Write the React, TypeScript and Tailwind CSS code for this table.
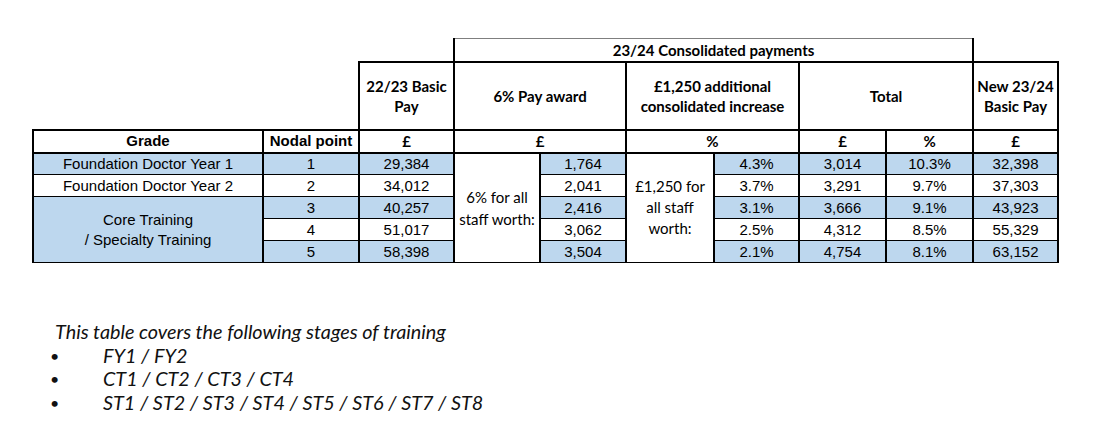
import React from 'react';

const BLUE = 'bg-[#bdd7ee]';

type Row = {
  grade?: { text: React.ReactNode; span?: number };
  nodal: string;
  basic: string;
  award: string;
  pct: string;
  total: string;
  totalPct: string;
  newPay: string;
  blue: boolean;
};

const rows: Row[] = [
  { grade: { text: 'Foundation Doctor Year 1' }, nodal: '1', basic: '29,384', award: '1,764', pct: '4.3%', total: '3,014', totalPct: '10.3%', newPay: '32,398', blue: true },
  { grade: { text: 'Foundation Doctor Year 2' }, nodal: '2', basic: '34,012', award: '2,041', pct: '3.7%', total: '3,291', totalPct: '9.7%', newPay: '37,303', blue: false },
  {
    grade: { text: (<>Core Training<br />/ Specialty Training</>), span: 3 },
    nodal: '3', basic: '40,257', award: '2,416', pct: '3.1%', total: '3,666', totalPct: '9.1%', newPay: '43,923', blue: true,
  },
  { nodal: '4', basic: '51,017', award: '3,062', pct: '2.5%', total: '4,312', totalPct: '8.5%', newPay: '55,329', blue: false },
  { nodal: '5', basic: '58,398', award: '3,504', pct: '2.1%', total: '4,754', totalPct: '8.1%', newPay: '63,152', blue: true },
];

const colWidths = [230, 96, 95, 86, 86, 88, 85, 87, 87, 85];

const head = "border-2 border-black text-center align-middle font-bold text-[15px] leading-[20px] font-['Lato',sans-serif] p-0";
const cell = "border-x-2 border-y border-black text-center align-middle p-0";

export default function App() {
  return (
    <div className="min-h-[445px] bg-white pl-[32px] pt-[38px] text-black">
      <table className="table-fixed border-collapse w-[1025px] font-['Liberation_Sans',Arial,sans-serif] text-[15px]">
        <colgroup>
          {colWidths.map((w, i) => (
            <col key={i} style={{ width: w }} />
          ))}
        </colgroup>
        <thead>
          <tr className="h-[23px]">
            <th colSpan={3} className="p-0" />
            <th colSpan={6} className={`${head} border-t border-t-[#7f7f7f]`}>
              23/24 Consolidated payments
            </th>
            <th className="p-0" />
          </tr>
          <tr className="h-[68px]">
            <th colSpan={2} className="p-0" />
            <th className={head}>22/23 Basic<br />Pay</th>
            <th colSpan={2} className={head}>6% Pay award</th>
            <th colSpan={2} className={head}>£1,250 additional<br />consolidated increase</th>
            <th colSpan={2} className={head}>Total</th>
            <th className={head}>New 23/24<br />Basic Pay</th>
          </tr>
          <tr className="h-[23px]">
            <th className={`${head} font-['Liberation_Sans',Arial,sans-serif] text-[14.5px]`}>Grade</th>
            <th className={`${head} font-['Liberation_Sans',Arial,sans-serif] text-[14.5px]`}>Nodal point</th>
            <th className={head}>£</th>
            <th colSpan={2} className={head}>£</th>
            <th colSpan={2} className={head}>%</th>
            <th className={head}>£</th>
            <th className={head}>%</th>
            <th className={head}>£</th>
          </tr>
        </thead>
        <tbody>
          {rows.map((r, i) => {
            const bg = r.blue ? BLUE : 'bg-white';
            return (
              <tr key={i} className="h-[22px] leading-[18px]">
                {r.grade && (
                  <td
                    rowSpan={r.grade.span}
                    className={`${cell} ${bg} ${r.grade.span ? 'leading-[20px]' : ''}`}
                  >
                    {r.grade.text}
                  </td>
                )}
                <td className={`${cell} ${bg}`}>{r.nodal}</td>
                <td className={`${cell} ${bg}`}>{r.basic}</td>
                {i === 0 && (
                  <td rowSpan={5} className={`${cell} bg-white font-['Lato',sans-serif] text-[15px] leading-[22px]`}>
                    6% for all<br />staff worth:
                  </td>
                )}
                <td className={`${cell} ${bg}`}>{r.award}</td>
                {i === 0 && (
                  <td rowSpan={5} className={`${cell} bg-white font-['Lato',sans-serif] text-[15px] leading-[21px]`}>
                    £1,250 for<br />all staff<br />worth:
                  </td>
                )}
                <td className={`${cell} ${bg}`}>{r.pct}</td>
                <td className={`${cell} ${bg}`}>{r.total}</td>
                <td className={`${cell} ${bg}`}>{r.totalPct}</td>
                <td className={`${cell} ${bg}`}>{r.newPay}</td>
              </tr>
            );
          })}
        </tbody>
      </table>

      {/* stages note */}
      <div className="mt-[57px] font-['Lato',sans-serif] italic text-[19.8px] leading-[23.5px] text-[#111]">
        <p className="pl-[23px]">This table covers the following stages of training</p>
        <ul className="pl-[18px]">
          {['FY1 / FY2', 'CT1 / CT2 / CT3 / CT4', 'ST1 / ST2 / ST3 / ST4 / ST5 / ST6 / ST7 / ST8'].map((t) => (
            <li key={t} className="flex">
              <span className="w-[53px] not-italic text-[16px]">•</span>
              <span>{t}</span>
            </li>
          ))}
        </ul>
      </div>
    </div>
  );
}
